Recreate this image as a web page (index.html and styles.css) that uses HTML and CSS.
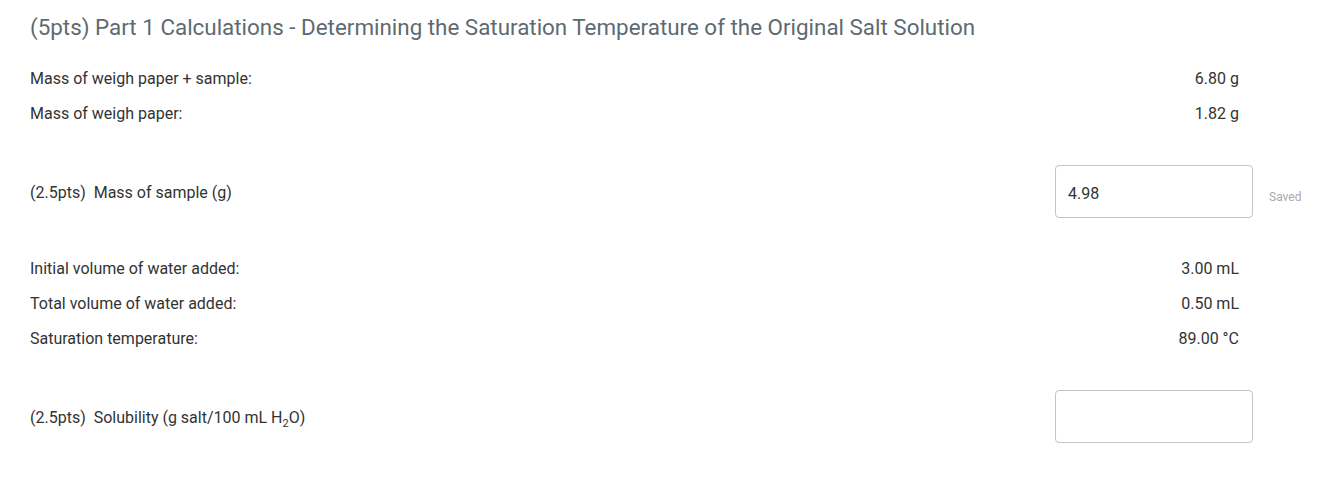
FILE: index.html
```html
<!DOCTYPE html>
<html>
<head>
<meta charset="utf-8">
<link rel="stylesheet" href="styles.css">
</head>
<body>
<div class="page">
  <h1 class="title">(5pts) Part 1 Calculations - Determining the Saturation Temperature of the Original Salt Solution</h1>

  <div class="section first">
    <div class="row"><div class="label">Mass of weigh paper + sample:</div><div class="val">6.80 g</div><div class="status"></div></div>
    <div class="row"><div class="label">Mass of weigh paper:</div><div class="val">1.82 g</div><div class="status"></div></div>
  </div>

  <div class="section input-section">
    <div class="row input-row"><div class="label">(2.5pts)&nbsp; Mass of sample (g)</div><div class="field"><input class="box" type="text" value="4.98"></div><div class="status saved">Saved</div></div>
  </div>

  <div class="section after-input">
    <div class="row"><div class="label">Initial volume of water added:</div><div class="val">3.00 mL</div><div class="status"></div></div>
    <div class="row"><div class="label">Total volume of water added:</div><div class="val">0.50 mL</div><div class="status"></div></div>
    <div class="row"><div class="label">Saturation temperature:</div><div class="val">89.00 °C</div><div class="status"></div></div>
  </div>

  <div class="section input-section">
    <div class="row input-row"><div class="label">(2.5pts)&nbsp; Solubility (g salt/100 mL H<sub>2</sub>O)</div><div class="field"><input class="box" type="text" value=""></div><div class="status"></div></div>
  </div>
</div>
</body>
</html>
```

FILE: styles.css
```css
html, body {
  margin: 0;
  padding: 0;
  background: #ffffff;
}
body {
  font-family: Roboto, "Liberation Sans", Arial, sans-serif;
  color: #333333;
}
.page {
  padding: 12px 10px 0 30px;
  width: 1299px;
}
.title {
  margin: 0;
  font-size: 22.4px;
  line-height: 30px;
  font-weight: 400;
  color: #5e6a71;
}
.section {
  margin-top: 34px;
}
.section.first {
  margin-top: 18px;
}
.section.input-section {
  margin-top: 35px;
}
.section.after-input {
  margin-top: 32px;
}
.row {
  display: flex;
  align-items: center;
  height: 35px;
  font-size: 16px;
}
.input-row {
  height: 53px;
}
.label {
  flex: 1;
  padding-top: 2px;
}
.val {
  width: 198px;
  box-sizing: border-box;
  padding-top: 2px;
  padding-right: 14px;
  text-align: right;
}
.field {
  width: 198px;
  height: 53px;
}
.box {
  display: block;
  box-sizing: border-box;
  width: 198px;
  height: 53px;
  border: 1px solid #c4c4c4;
  border-radius: 4px;
  padding: 4px 12px 0 12px;
  font-family: Roboto, "Liberation Sans", Arial, sans-serif;
  font-size: 16px;
  color: #333333;
  background: #ffffff;
  outline: none;
}
.status {
  width: 60px;
  margin-left: 16px;
  font-size: 12px;
  color: #aaaaaa;
}
.saved {
  padding-top: 10px;
}
sub {
  font-size: 11px;
  vertical-align: -4px;
  line-height: 0;
}
```
